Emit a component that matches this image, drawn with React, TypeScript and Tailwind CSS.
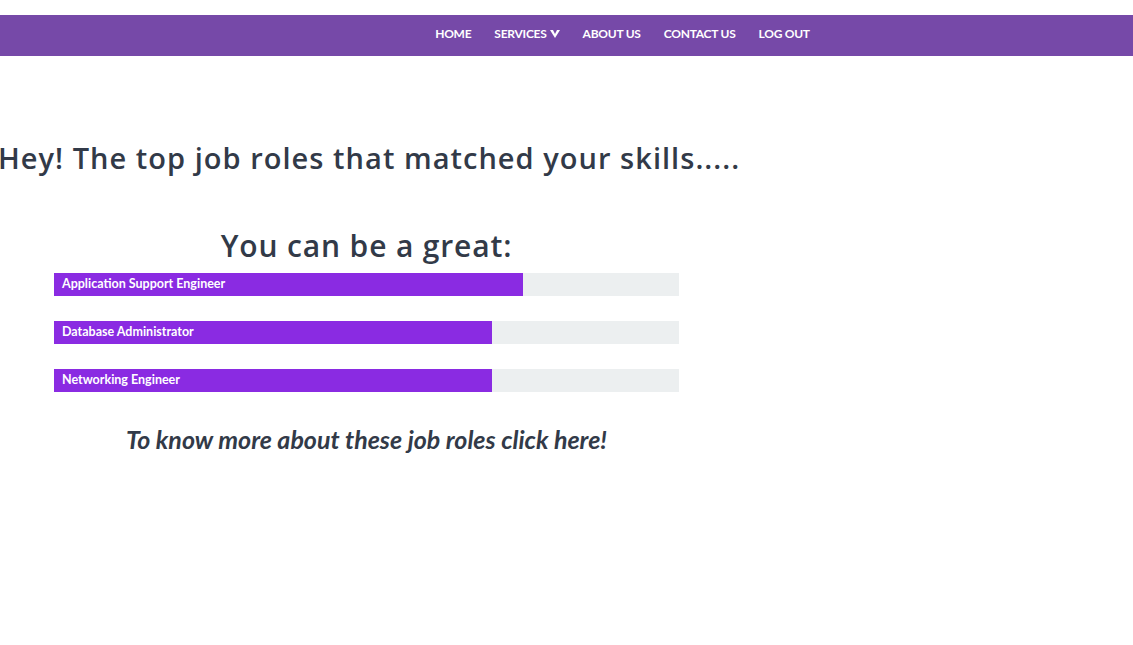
const roles = [
  { name: 'Application Support Engineer', pct: 75 },
  { name: 'Database Administrator', pct: 70 },
  { name: 'Networking Engineer', pct: 70 },
]

const navItems = ['HOME', 'SERVICES', 'ABOUT US', 'CONTACT US', 'LOG OUT']

export default function App() {
  return (
    <div className="min-h-[645px] bg-white text-[#323a48]">
      {/* Navbar */}
      <div className="pt-[15px]">
        <nav className="h-[41px] bg-[#7649a8] flex items-center justify-center font-['Lato',sans-serif]">
          <ul className="flex items-center gap-[23px] ml-[112px] pb-[4px] text-[12px] font-bold text-white tracking-[-0.25px]">
            {navItems.map((item) => (
              <li key={item} className="flex items-center">
                {item}
                {item === 'SERVICES' && (
                  <svg viewBox="0 0 10 8" className="ml-[3px] h-[8px] w-[10px]" fill="currentColor">
                    <path d="M0 0h3l2 4 2-4h3L5 8z" />
                  </svg>
                )}
              </li>
            ))}
          </ul>
        </nav>
      </div>

      {/* Heading */}
      <h1 className="mt-[83px] -ml-[2px] text-[29px] leading-[38px] font-semibold tracking-[1.03px] font-['Open_Sans',sans-serif]">
        Hey! The top job roles that matched your skills.....
      </h1>

      {/* Results */}
      <div className="ml-[54px] w-[625px] mt-[50px] flex flex-col items-center">
        <h2 className="text-[30px] leading-[38px] font-semibold tracking-[0.85px] font-['Open_Sans',sans-serif]">
          You can be a great:
        </h2>
        <div className="mt-[8px] w-full flex flex-col gap-[25px]">
          {roles.map((role) => (
            <div key={role.name} className="h-[23px] w-full bg-[#eceff0]">
              <div
                className="h-full bg-[#8a2be2] flex items-center pl-[8px] font-['Lato',sans-serif] text-[12.5px] font-bold text-white"
                style={{ width: `${role.pct}%` }}
              >
                {role.name}
              </div>
            </div>
          ))}
        </div>
        <p className="mt-[31px] font-['Lato',sans-serif] italic font-bold text-[25px] leading-[32px]">
          To know more about these job roles click here!
        </p>
      </div>
    </div>
  )
}
